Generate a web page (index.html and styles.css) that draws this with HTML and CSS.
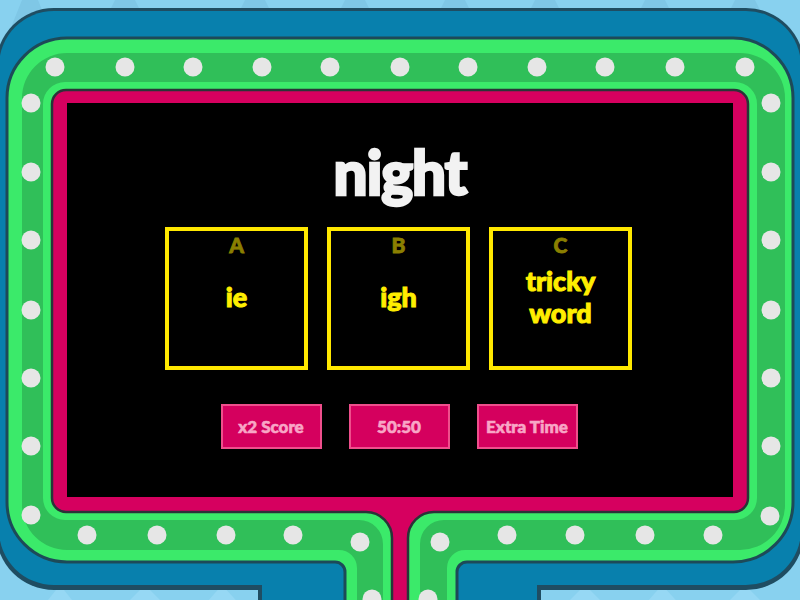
FILE: index.html
```html
<!DOCTYPE html>
<html lang="en">
<head>
<meta charset="utf-8">
<title>night</title>
<link rel="stylesheet" href="styles.css">
</head>
<body>
<div class="stage">
  <svg class="frame" width="800" height="600" viewBox="0 0 800 600" xmlns="http://www.w3.org/2000/svg">
    <rect x="0" y="0" width="800" height="600" fill="#88d1ef"/>
    <g fill="#7fc7e6">
      <polygon points="10,30 30,-20 50,30"/>
      <polygon points="100,30 125,-20 150,30"/>
      <polygon points="230,30 255,-20 280,30"/>
      <polygon points="330,30 355,-20 380,30"/>
      <polygon points="430,30 455,-20 480,30"/>
      <polygon points="520,30 545,-20 570,30"/>
      <polygon points="630,30 655,-20 680,30"/>
      <polygon points="720,30 745,-20 770,30"/>
    </g>
    <g fill="#96d8f4">
      <polygon points="40,610 60,585 80,610"/>
      <polygon points="120,610 145,585 170,610"/>
      <polygon points="200,610 222,585 245,610"/>
      <polygon points="560,610 585,585 610,610"/>
      <polygon points="640,610 662,585 685,610"/>
      <polygon points="720,610 745,585 770,610"/>
    </g>
    <!-- blue board -->
    <rect x="-4" y="8" width="808" height="582" rx="58" fill="#1f4d62"/>
    <rect x="258" y="500" width="283" height="110" fill="#1f4d62"/>
    <rect x="-1" y="11" width="802" height="574" rx="55" fill="#0880ad"/>
    <rect x="262" y="500" width="275" height="110" fill="#0880ad"/>
    <!-- green ring -->
    <path fill="#3bea6a" stroke="#1d4a58" stroke-width="3" d="M 67 38 H 733 A 60 60 0 0 1 793 98 V 502 A 60 60 0 0 1 733 562 H 467 A 10 10 0 0 0 457 572 V 612 H 345 V 572 A 10 10 0 0 0 335 562 H 67 A 60 60 0 0 1 7 502 V 98 A 60 60 0 0 1 67 38 Z"/>
    <path fill="#30bf59" d="M 67 53 H 740 A 45 45 0 0 1 785 98 V 505 A 45 45 0 0 1 740 550 H 465 A 18 18 0 0 0 447 568 V 612 H 357 V 568 A 18 18 0 0 0 339 550 H 67 A 45 45 0 0 1 22 505 V 98 A 45 45 0 0 1 67 53 Z"/>
    <path fill="#3bea6a" d="M 65 82 H 735 A 22 22 0 0 1 757 104 V 498 A 22 22 0 0 1 735 520 H 444 A 24 24 0 0 0 420 544 V 612 H 383 V 544 A 24 24 0 0 0 359 520 H 65 A 22 22 0 0 1 43 498 V 104 A 22 22 0 0 1 65 82 Z"/>
    <!-- magenta -->
    <path fill="#d6005f" stroke="#2a3438" stroke-width="2.5" d="M 66 90 H 734 A 14 14 0 0 1 748 104 V 498 A 14 14 0 0 1 734 512 H 434 A 26 26 0 0 0 408 538 V 612 H 392 V 538 A 26 26 0 0 0 366 512 H 66 A 14 14 0 0 1 52 498 V 104 A 14 14 0 0 1 66 90 Z"/>
    <rect x="67" y="103" width="666" height="394" fill="#000"/>
    <!-- lights -->
    <g fill="#e6e6e6">
      <circle cx="55" cy="67" r="9.5"/><circle cx="125" cy="67" r="9.5"/><circle cx="193" cy="67" r="9.5"/>
      <circle cx="262" cy="67" r="9.5"/><circle cx="330" cy="67" r="9.5"/><circle cx="400" cy="67" r="9.5"/>
      <circle cx="468" cy="67" r="9.5"/><circle cx="537" cy="67" r="9.5"/><circle cx="605" cy="67" r="9.5"/>
      <circle cx="675" cy="67" r="9.5"/><circle cx="745" cy="67" r="9.5"/>
      <circle cx="31" cy="103" r="9.5"/><circle cx="31" cy="172" r="9.5"/><circle cx="31" cy="240" r="9.5"/>
      <circle cx="31" cy="310" r="9.5"/><circle cx="31" cy="378" r="9.5"/><circle cx="31" cy="446" r="9.5"/>
      <circle cx="31" cy="515" r="9.5"/>
      <circle cx="771" cy="103" r="9.5"/><circle cx="771" cy="172" r="9.5"/><circle cx="771" cy="240" r="9.5"/>
      <circle cx="771" cy="310" r="9.5"/><circle cx="771" cy="378" r="9.5"/><circle cx="771" cy="446" r="9.5"/>
      <circle cx="770" cy="516" r="9.5"/>
      <circle cx="87" cy="535" r="9.5"/><circle cx="157" cy="535" r="9.5"/><circle cx="226" cy="535" r="9.5"/>
      <circle cx="293" cy="535" r="9.5"/><circle cx="360" cy="542" r="9.5"/><circle cx="372" cy="599" r="9.5"/>
      <circle cx="507" cy="535" r="9.5"/><circle cx="575" cy="535" r="9.5"/><circle cx="645" cy="535" r="9.5"/>
      <circle cx="713" cy="535" r="9.5"/><circle cx="440" cy="542" r="9.5"/><circle cx="428" cy="599" r="9.5"/>
    </g>
  </svg>
  <main class="screen">
    <h1 class="word">night</h1>
    <div class="answers">
      <div class="answer"><span class="key">A</span><span class="text">ie</span></div>
      <div class="answer"><span class="key">B</span><span class="text">igh</span></div>
      <div class="answer"><span class="key">C</span><span class="text">tricky<br>word</span></div>
    </div>
    <div class="powerups">
      <button class="power">x2 Score</button>
      <button class="power">50:50</button>
      <button class="power">Extra Time</button>
    </div>
  </main>
</div>
</body>
</html>
```

FILE: styles.css
```css
html, body {
  margin: 0;
  padding: 0;
  background: #88d1ef;
}

.stage {
  position: relative;
  width: 800px;
  height: 600px;
  overflow: hidden;
  padding-top: 103px;
  box-sizing: border-box;
  font-family: "Lato", "Roboto", "Liberation Sans", sans-serif;
}

.frame {
  position: absolute;
  left: 0;
  top: 0;
  display: block;
}

.screen {
  position: relative;
  margin-left: 67px;
  width: 666px;
  height: 394px;
  padding-top: 39px;
  box-sizing: border-box;
  display: flex;
  flex-direction: column;
  align-items: center;
}

.word {
  margin: 0;
  font-size: 60px;
  line-height: 60px;
  font-weight: 900;
  color: #f2f2f2;
  letter-spacing: -1px;
  -webkit-text-stroke: 2.5px #f2f2f2;
}

.answers {
  display: flex;
  gap: 19px;
  margin-top: 25px;
  margin-right: 3px;
}

.answer {
  width: 143px;
  height: 143px;
  box-sizing: border-box;
  border: 4px solid #ffe800;
  display: flex;
  flex-direction: column;
  align-items: center;
}

.key {
  margin-top: 2px;
  font-size: 21px;
  line-height: 24px;
  font-weight: 900;
  color: #8a7f00;
  -webkit-text-stroke: 0.8px #8a7f00;
}

.text {
  height: 80px;
  display: flex;
  align-items: center;
  justify-content: center;
  text-align: center;
  font-size: 27px;
  line-height: 32px;
  font-weight: 900;
  color: #ffee00;
  -webkit-text-stroke: 1px #ffee00;
}

.powerups {
  display: flex;
  gap: 27px;
  margin-top: 34px;
  margin-right: 2px;
}

.power {
  width: 101px;
  height: 45px;
  padding: 0;
  box-sizing: border-box;
  background: #d5005e;
  border: 2px solid #ef4f8c;
  color: #f8a6c6;
  font-family: "Lato", "Roboto", "Liberation Sans", sans-serif;
  font-size: 17px;
  font-weight: 900;
  -webkit-text-stroke: 0.6px #f8a6c6;
}
```
